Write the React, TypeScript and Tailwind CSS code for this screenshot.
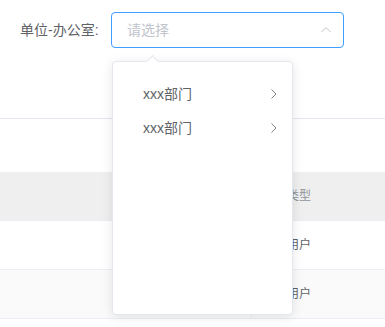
import React from 'react';

const rows = [
    { type: '用户类型', header: true },
    { type: '普通用户', header: false, bg: 'bg-white' },
    { type: '普通用户', header: false, bg: 'bg-[#fafafa]' },
];

export default function App() {
    return (
        <div
            className="relative w-[385px] h-[327px] bg-white overflow-hidden"
            style={{ fontFamily: '"Liberation Sans", "Noto Sans CJK SC", sans-serif' }}
        >
            {/* 表单区域 */}
            <div className="flex items-center pt-[12px] h-[48px]">
                <label className="w-[111px] pl-[20px] text-[14px] text-[#606266]">单位-办公室:</label>
                <div className="flex items-center justify-between w-[233px] h-[36px] border border-[#409eff] rounded-[4px] pl-[15px] pr-[11px]">
                    <span className="text-[14px] text-[#c0c4cc]">请选择</span>
                    <svg width="12" height="12" viewBox="0 0 12 12" fill="none">
                        <path d="M1.5 8L6 3.5L10.5 8" stroke="#c0c4cc" strokeWidth="1" />
                    </svg>
                </div>
            </div>

            <div className="mt-[70px] border-b border-[#e4e7ed]" />

            {/* 表格 */}
            <div className="mt-[53px]">
                {rows.map((r, i) => (
                    <div
                        key={i}
                        className={`flex h-[49px] border-b border-[#ebeef5] ${r.header ? 'bg-[#efefef]' : r.bg}`}
                    >
                        <div className="w-[252px] border-r border-[#ebeef5]" />
                        <div
                            className={`flex items-center pl-[11px] text-[12px] ${r.header ? 'text-[#909399]' : 'text-[#606266]'}`}
                        >
                            {r.type}
                        </div>
                    </div>
                ))}
            </div>

            {/* 级联下拉菜单 */}
            <div className="absolute left-[112px] top-[61px] w-[181px] h-[254px] bg-white border border-[#e4e7ed] rounded-[4px] shadow-[0_2px_12px_0_rgba(0,0,0,0.1)]">
                <div className="absolute -top-[5px] left-[35px] w-[9px] h-[9px] bg-white border-l border-t border-[#e4e7ed] rotate-45" />
                <div className="pt-[15px]">
                    {['xxx部门', 'xxx部门'].map((name, i) => (
                        <div key={i} className="flex items-center justify-between h-[34px] pl-[30px] pr-[14px] text-[14px] text-[#606266]">
                            <span>{name}</span>
                            <svg width="8" height="12" viewBox="0 0 8 12" fill="none">
                                <path d="M1.5 1.5L6 6L1.5 10.5" stroke="#808288" strokeWidth="1" />
                            </svg>
                        </div>
                    ))}
                </div>
            </div>
        </div>
    );
}
